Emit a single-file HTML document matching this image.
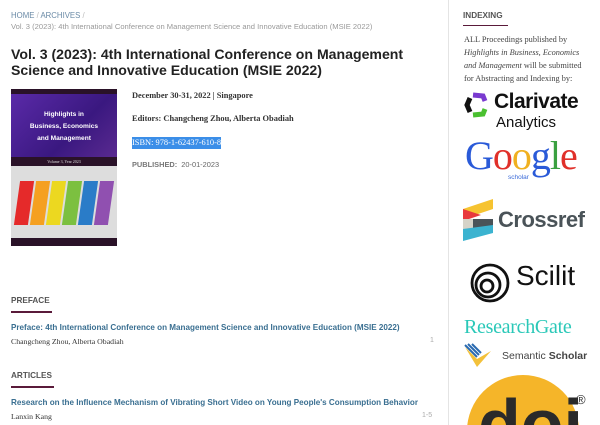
<!DOCTYPE html>
<html style="overflow:hidden;height:425px"><head><meta charset="utf-8"><style>
*{margin:0;padding:0;box-sizing:border-box}
body{width:600px;height:425px;overflow:hidden;background:#fff;font-family:"Liberation Sans",sans-serif;position:relative}
.a{position:absolute;white-space:nowrap}
.serif{font-family:"Liberation Serif",serif}
.lnk{color:#3a6f91;font-weight:bold;font-size:8.1px}
</style></head><body>
<div class="a" style="left:11px;top:11px;font-size:7.8px;color:#6a8aa6">HOME <span style="color:#bbb">/</span> ARCHIVES <span style="color:#bbb">/</span></div>
<div class="a" style="left:11px;top:22px;font-size:7.6px;color:#999">Vol. 3 (2023): 4th International Conference on Management Science and Innovative Education (MSIE 2022)</div>
<div class="a" style="left:11px;top:46px;font-size:14.1px;font-weight:bold;color:#222;line-height:16px">Vol. 3 (2023): 4th International Conference on Management<br>Science and Innovative Education (MSIE 2022)</div>

<div class="a" style="left:11px;top:89px;width:106px;height:157px;background:#ddd">
 <div style="position:absolute;left:0;top:0;width:106px;height:5px;background:#2a1228"></div>
 <div style="position:absolute;left:0;top:5px;width:106px;height:63px;background:linear-gradient(135deg,#5a2aa8,#3a1880 60%,#5a2a90)"></div>
 <div style="position:absolute;left:0;top:20px;width:106px;text-align:center;color:#fff;font-weight:bold;font-size:6.6px;line-height:12px">Highlights in<br>Business, Economics<br>and Management</div>
 <div style="position:absolute;left:0;top:68px;width:106px;height:9px;background:#2a1228;color:#ddd;font-size:4px;text-align:center;line-height:9px" class="serif">Volume 3, Year 2023</div>
 <div style="position:absolute;left:6px;top:92px;width:94px;height:44px;display:flex;gap:2px;transform:skewX(-8deg)">
  <div style="flex:1;background:#e52a2a"></div><div style="flex:1;background:#f5a020"></div><div style="flex:1;background:#ecd820"></div><div style="flex:1;background:#7cc040"></div><div style="flex:1;background:#2a7cc8"></div><div style="flex:1;background:#9050b0"></div>
 </div>
 <div style="position:absolute;left:0;top:149px;width:106px;height:8px;background:#2a1228"></div>
</div>

<div class="a serif" style="left:132px;top:91px;font-size:8.4px;font-weight:bold;color:#333">December 30-31, 2022 | Singapore</div>
<div class="a serif" style="left:132px;top:114px;font-size:8.4px;font-weight:bold;color:#333">Editors: Changcheng Zhou, Alberta Obadiah</div>
<div class="a serif" style="left:132px;top:137px;font-size:8.4px;color:#fff;background:#3b8ee8;padding:1px 0;line-height:10px">ISBN: 978-1-62437-610-8</div>
<div class="a" style="left:132px;top:160px;font-size:7.4px;color:#666"><b style="color:#777">PUBLISHED:</b>&nbsp; 20-01-2023</div>

<div class="a" style="left:11px;top:296px;font-size:8.2px;font-weight:bold;color:#555">PREFACE</div>
<div class="a" style="left:11px;top:311px;width:41px;height:2px;background:#5a1a3a"></div>
<div class="a lnk" style="left:11px;top:323px">Preface: 4th International Conference on Management Science and Innovative Education (MSIE 2022)</div>
<div class="a serif" style="left:11px;top:337px;font-size:7.8px;color:#333">Changcheng Zhou, Alberta Obadiah</div>
<div class="a" style="left:430px;top:337px;font-size:7px;color:#aaa">1</div>

<div class="a" style="left:11px;top:371px;font-size:8.2px;font-weight:bold;color:#555">ARTICLES</div>
<div class="a" style="left:11px;top:386px;width:43px;height:2px;background:#5a1a3a"></div>
<div class="a lnk" style="left:11px;top:398px">Research on the Influence Mechanism of Vibrating Short Video on Young People's Consumption Behavior</div>
<div class="a serif" style="left:11px;top:412px;font-size:7.8px;color:#333">Lanxin Kang</div>
<div class="a" style="left:422px;top:412px;font-size:7px;color:#aaa">1-5</div>

<div class="a" style="left:448px;top:0;width:1px;height:425px;background:#e4e4e4"></div>

<div class="a" style="left:463px;top:11px;font-size:8.2px;font-weight:bold;color:#555">INDEXING</div>
<div class="a" style="left:463px;top:25px;width:45px;height:1px;background:#5a1a3a"></div>
<div class="a serif" style="left:464px;top:33px;font-size:8.3px;line-height:13px;color:#444">ALL Proceedings published by<br><i>Highlights in Business, Economics<br>and Management</i> will be submitted<br>for Abstracting and Indexing by:</div>

<svg class="a" style="left:463px;top:92px" width="26" height="26" viewBox="0 0 26 26"><path d="M10 3 L20 4 L22 9" stroke="#7a3ad0" stroke-width="5" fill="none"/><path d="M22 17 L20 22 L10 23" stroke="#4ac030" stroke-width="5" fill="none"/><path d="M7 6 L4 13 L7 20" stroke="#111" stroke-width="5" fill="none"/></svg>
<div class="a" style="left:494px;top:90px;font-size:21px;font-weight:bold;color:#111;letter-spacing:-.5px">Clarivate</div>
<div class="a" style="left:496px;top:114px;font-size:15px;color:#111">Analytics</div>

<div class="a serif" style="left:465px;top:134px;font-size:40px;letter-spacing:-1px;line-height:44px"><span style="color:#2a5ad8">G</span><span style="color:#e0302a">o</span><span style="color:#f0b020">o</span><span style="color:#2a5ad8">g</span><span style="color:#3aa040">l</span><span style="color:#e0302a">e</span></div>
<div class="a" style="left:508px;top:174px;font-size:6.5px;color:#3a6ad8">scholar</div>

<svg class="a" style="left:463px;top:197px" width="32" height="44" viewBox="0 0 32 44"><polygon points="0,12 30,2 30,12 0,22" fill="#f6c330"/><polygon points="0,12 18,18 0,24" fill="#e8393d"/><polygon points="0,22 30,22 30,32 0,32" fill="#d6d3c8"/><polygon points="10,22 30,22 30,32 10,32" fill="#4a5358"/><polygon points="0,32 30,28 30,36 0,44" fill="#3bb3d0"/></svg>
<div class="a" style="left:498px;top:207px;font-size:22px;font-weight:bold;color:#4a5358;letter-spacing:-.5px">Crossref</div>

<svg class="a" style="left:470px;top:263px" width="40" height="40" viewBox="0 0 40 40" fill="none" stroke="#111" stroke-width="2.8"><circle cx="20" cy="20" r="18"/><circle cx="18" cy="22" r="12"/><circle cx="17" cy="23" r="6"/></svg>
<div class="a" style="left:516px;top:260px;font-size:28px;color:#111">Scilit</div>

<div class="a serif" style="left:464px;top:316px;font-size:20px;color:#2ac8b8;letter-spacing:-.3px">ResearchGate</div>

<svg class="a" style="left:463px;top:343px" width="32" height="26" viewBox="0 0 32 26"><path d="M2 4 L14 16 L28 8 L14 24 Z" fill="#f3c13a"/><path d="M2 2 L14 14 M5 1 L16 12 M9 1 L18 10" stroke="#2a6ab0" stroke-width="2"/></svg>
<div class="a" style="left:502px;top:350px;font-size:10.5px;color:#444">Semantic <b>Scholar</b></div>

<div class="a" style="left:460px;top:372px;width:140px;height:53px;overflow:hidden">
 <div style="position:absolute;left:7px;top:3px;width:112px;height:112px;border-radius:50%;background:#f5b529"></div>
 <div style="position:absolute;left:18px;top:12px;font-size:70px;font-weight:bold;color:#2a2a2a;line-height:80px">doi</div>
 <div style="position:absolute;left:116px;top:20px;font-size:13px;color:#333">®</div>
</div>
</body></html>
